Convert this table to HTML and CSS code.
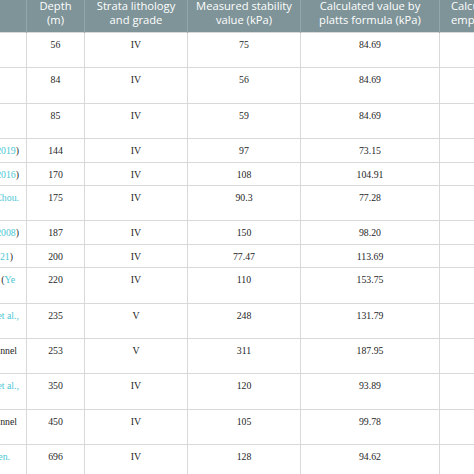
FILE: index.html
```html
<!DOCTYPE html>
<html>
<head>
<meta charset="utf-8">
<link rel="stylesheet" href="styles.css">
</head>
<body>
<div class="viewport">
<table class="data">
<colgroup>
<col class="c0"><col class="c1"><col class="c2"><col class="c3"><col class="c4"><col class="c5">
</colgroup>
<thead>
<tr>
<th class="ref"></th>
<th>Depth<br>(m)</th>
<th>Strata lithology<br>and grade</th>
<th>Measured stability<br>value (kPa)</th>
<th>Calculated value by<br>platts formula (kPa)</th>
<th class="last">Calculated value by<br>empirical formula (kPa)</th>
</tr>
</thead>
<tbody>
<tr class="two"><td class="ref"></td><td>56</td><td>IV</td><td>75</td><td>84.69</td><td></td></tr>
<tr class="two"><td class="ref"></td><td>84</td><td>IV</td><td>56</td><td>84.69</td><td></td></tr>
<tr class="two"><td class="ref"></td><td>85</td><td>IV</td><td>59</td><td>84.69</td><td></td></tr>
<tr><td class="ref"><a>2019</a>)</td><td>144</td><td>IV</td><td>97</td><td>73.15</td><td></td></tr>
<tr><td class="ref"><a>2016</a>)</td><td>170</td><td>IV</td><td>108</td><td>104.91</td><td></td></tr>
<tr class="two"><td class="ref"><a>Chou.</a></td><td>175</td><td>IV</td><td>90.3</td><td>77.28</td><td></td></tr>
<tr><td class="ref"><a>2008</a>)</td><td>187</td><td>IV</td><td>150</td><td>98.20</td><td></td></tr>
<tr><td class="ref e13"><a>2021</a>)</td><td>200</td><td>IV</td><td>77.47</td><td>113.69</td><td></td></tr>
<tr class="two"><td class="ref e15">tunnel (<a>Ye</a></td><td>220</td><td>IV</td><td>110</td><td>153.75</td><td></td></tr>
<tr class="two"><td class="ref"><a>et al.,</a></td><td>235</td><td>V</td><td>248</td><td>131.79</td><td></td></tr>
<tr class="two"><td class="ref e17">Tunnel</td><td>253</td><td>V</td><td>311</td><td>187.95</td><td></td></tr>
<tr class="two"><td class="ref"><a>et al.,</a></td><td>350</td><td>IV</td><td>120</td><td>93.89</td><td></td></tr>
<tr class="two"><td class="ref e17">Tunnel</td><td>450</td><td>IV</td><td>105</td><td>99.78</td><td></td></tr>
<tr class="two"><td class="ref e10"><a>Chen.</a></td><td>696</td><td>IV</td><td>128</td><td>94.62</td><td></td></tr>
</tbody>
</table>
</div>
</body>
</html>
```
FILE: styles.css
```css
html, body {
  margin: 0;
  padding: 0;
  background: #ffffff;
}
.viewport {
  width: 474px;
  height: 474px;
  overflow: hidden;
}
.data {
  border-collapse: collapse;
  table-layout: fixed;
  width: 693px;
  margin-left: -114px;
  margin-top: -9px;
  font-family: "Liberation Serif", "Times New Roman", serif;
  font-size: 9.8px;
  color: #1f1f1f;
}
.c0 { width: 140px; }
.c1 { width: 58px; }
.c2 { width: 103px; }
.c3 { width: 113px; }
.c4 { width: 139px; }
.c5 { width: 140px; }
.data th {
  background: #7e9498;
  color: #ffffff;
  font-family: "Open Sans", "Liberation Sans", sans-serif;
  font-weight: 400;
  font-size: 11.2px;
  line-height: 13.5px;
  padding: 8px 0 6px;
  text-align: center;
  vertical-align: middle;
  border-left: 1px solid #93a6a9;
  border-right: 1px solid #93a6a9;
}
.data th.last {
  text-align: left;
  padding-left: 11px;
}
.data td {
  border: 1px solid #d9d9d9;
  text-align: center;
  vertical-align: top;
  line-height: 12px;
  height: 12px;
  padding: 6px 0 4.4px;
  white-space: nowrap;
  overflow: hidden;
}
.data tr.two td {
  height: 24px;
}
.data td.ref {
  text-align: right;
  padding-right: 7px;
}
.data td.e13 { padding-right: 13px; }
.data td.e15 { padding-right: 11px; }
.data td.e17 { padding-right: 9px; }
.data td.e10 { padding-right: 16px; }
.data a {
  color: #4cc6d2;
}
```
